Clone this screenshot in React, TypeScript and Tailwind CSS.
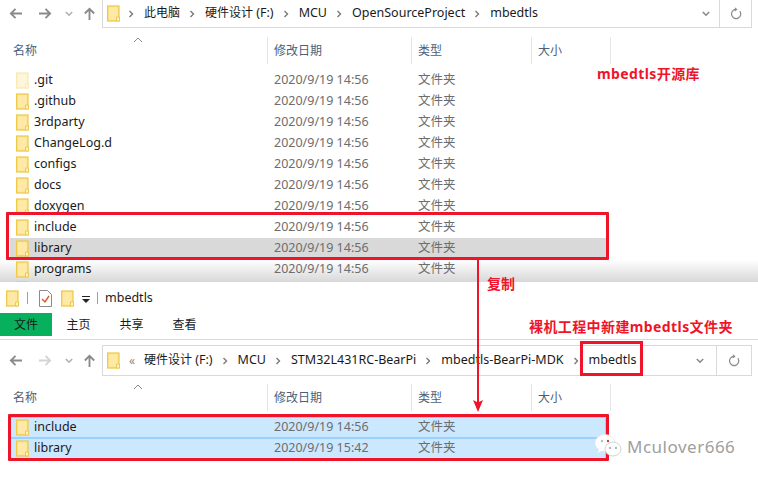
import React from "react";

const font = { fontFamily: '"Noto Sans","Noto Sans CJK SC",sans-serif' };

function Folder({ faded = false }: { faded?: boolean }) {
  return (
    <svg width="13" height="17" viewBox="0 0 13 17" className={faded ? "shrink-0 opacity-40" : "shrink-0"}>
      <rect x="0.6" y="1" width="11.4" height="15" fill="#fde48e" stroke="#eec94a" strokeWidth="1.2" />
      <rect x="2" y="2.5" width="8.6" height="12" fill="#fee9a6" />
      <path d="M9.5 16v-4h3v4z" fill="#fff3c4" stroke="#eec94a" strokeWidth="1" />
    </svg>
  );
}

function Sep() {
  return (
    <svg width="25" height="10" viewBox="0 0 25 10" className="shrink-0">
      <path d="M10.5 2l3 3-3 3" fill="none" stroke="#7a7a7a" strokeWidth="1.4" />
    </svg>
  );
}

function Arrow({ dir, light = false }: { dir: "left" | "right" | "up"; light?: boolean }) {
  const d = dir === "left" ? "M14 7H2M7 2L2 7l5 5" : dir === "right" ? "M0 7h12M7 2l5 5-5 5" : "M7 14V2M2 7l5-5 5 5";
  return (
    <svg width="13" height="13" viewBox="0 0 14 14" className="shrink-0">
      <path d={d} fill="none" stroke={light ? "#d4d4d4" : "#8a8a8a"} strokeWidth="2" />
    </svg>
  );
}

function Caret({ color = "#9a9a9a" }: { color?: string }) {
  return (
    <svg width="8" height="6" viewBox="0 0 10 7" className="shrink-0">
      <path d="M1 1l4 4 4-4" fill="none" stroke={color} strokeWidth="2" />
    </svg>
  );
}

function Refresh() {
  return (
    <svg width="12" height="13" viewBox="0 0 12 13" className="shrink-0">
      <path d="M9.8 4.2A4.6 4.6 0 1 1 6 2.4" fill="none" stroke="#8c8c8c" strokeWidth="1.2" />
      <path d="M4.8 0.2L7.6 2.4 4.8 4.6z" fill="#8c8c8c" />
    </svg>
  );
}

function Nav({ forwardLight, crumbs, lead, caretGap, refreshGap, tall }: {
  forwardLight: boolean;
  crumbs: React.ReactNode[];
  lead: React.ReactNode;
  caretGap: string;
  refreshGap: string;
  tall: string;
}) {
  return (
    <div className={`flex items-center pr-[6px] ${tall}`}>
      <div className="flex items-center w-[102px] shrink-0 pl-[9px] h-full">
        <Arrow dir="left" />
        <div className="ml-[17px]"><Arrow dir="right" light={forwardLight} /></div>
        <div className="ml-[13px]"><Caret color="#b0b0b0" /></div>
        <div className="ml-[10px]"><Arrow dir="up" /></div>
      </div>
      <div className="flex-1 h-full flex items-center pl-[4px] border border-[#d9d9d9] text-[12.5px] text-[#1a1a1a]">
        <Folder />
        {lead}
        {crumbs.map((c, i) => (
          <React.Fragment key={i}>
            {i > 0 && <Sep />}
            <span className="whitespace-nowrap">{c}</span>
          </React.Fragment>
        ))}
        <div className={`ml-auto flex items-center h-full ${caretGap}`}><Caret color="#8a8a8a" /></div>
        <div className={`flex items-center h-full border-l border-[#d9d9d9] ${refreshGap}`}><Refresh /></div>
      </div>
    </div>
  );
}

function Header() {
  return (
    <div className="relative flex h-[27px] items-center text-[12px] text-[#4c607a]">
      <svg width="10" height="6" viewBox="0 0 10 6" className="absolute left-[133px] top-0">
        <path d="M1 5l4-4 4 4" fill="none" stroke="#8a8a8a" strokeWidth="1" />
      </svg>
      <div className="w-[267px] pl-[13px]">名称</div>
      <div className="w-[144px] pl-[6px] h-full flex items-center border-l border-[#e5e5e5]">修改日期</div>
      <div className="w-[120px] pl-[6px] h-full flex items-center border-l border-[#e5e5e5]">类型</div>
      <div className="w-[80px] pl-[6px] h-full flex items-center border-x border-[#e5e5e5]">大小</div>
    </div>
  );
}

type RowProps = { name?: string; date?: string; faded?: boolean; tone?: "none" | "gray" | "blue" };

function Row({ name, date = "2020/9/19 14:56", faded, tone = "none" }: RowProps) {
  const bg = tone === "gray" ? "bg-[#d9d9d9]" : tone === "blue" ? "bg-[#cce8ff] border border-[#99d1ff]" : "";
  const pad = tone === "blue" ? "w-[263px] pl-[5px]" : "w-[264px] pl-[6px]";
  return (
    <div className={`relative flex items-center h-[21px] ml-[10px] w-[596px] text-[12.5px] ${bg}`}>
      <div className={`${pad} flex items-center text-[#1a1a1a] shrink-0`}>
        <Folder faded={faded} />
        {name && <span className="ml-[5px]">{name}</span>}
      </div>
      {name && <div className="w-[144px] text-[#6d6d6d] shrink-0">{date}</div>}
      {name && <div className="text-[#6d6d6d]">文件夹</div>}
    </div>
  );
}

const names = [".github", "3rdparty", "ChangeLog.d", "configs", "docs", "doxygen", "include"];
const drive = <><span className="text-[12px]">硬件设计</span> (F:)</>;

export default function App() {
  return (
    <div className="relative w-[758px] h-[477px] overflow-hidden bg-white" style={font}>
      {/* upper explorer window */}
      <div className="relative h-[282px] overflow-hidden">
        <div className="absolute left-0 right-0 bottom-0 h-[22px] bg-gradient-to-b from-white to-[#d8d8d8]" />
        <Nav
          forwardLight={false}
          crumbs={[<span className="text-[12px]">此电脑</span>, drive, "MCU", "OpenSourceProject", "mbedtls"]}
          lead={<div className="-ml-[1px]"><Sep /></div>}
          caretGap="pr-[9px]"
          refreshGap="pl-[10px] pr-[9px]"
          tall="relative h-[29px] -mt-[1px]"
        />
        <div className="h-[9px]" />
        <Header />
        <div className="h-[6px]" />
        <Row name=".git" faded />
        {names.map((n) => <Row key={n} name={n} />)}
        <Row name="library" tone="gray" />
        <Row name="programs" />
        <div className="-mt-[1px]"><Row /></div>
      </div>

      {/* lower explorer window */}
      <div className="flex items-center h-[31px] pl-[6px] pt-[1px]">
        <Folder />
        <div className="ml-[8px] w-px h-[12px] bg-[#a0a0a0]" />
        <svg width="13" height="17" viewBox="0 0 13 17" className="ml-[11px]">
          <path d="M.5.5h8l4 4v12H.5z" fill="#fff" stroke="#8a8a8a" />
          <path d="M3 9l3 3 4-6" fill="none" stroke="#e0562a" strokeWidth="1.4" />
        </svg>
        <div className="ml-[9px]"><Folder /></div>
        <svg width="8" height="7" viewBox="0 0 8 7" className="ml-[8px] mt-[3px]">
          <path d="M0 0h8v1H0zM0 3h8L4 7z" fill="#222" />
        </svg>
        <div className="ml-[7px] w-px h-[12px] bg-[#a0a0a0]" />
        <span className="ml-[7px] text-[12.5px] text-[#1a1a1a]">mbedtls</span>
      </div>
      <div className="flex items-center h-[23px] text-[12px] text-[#1a1a1a]">
        <div className="w-[52px] h-full bg-[#07b05d] flex items-center justify-center">文件</div>
        <div className="w-[53px] text-center pt-[1px]">主页</div>
        <div className="w-[53px] text-center pt-[1px]">共享</div>
        <div className="w-[53px] text-center pt-[1px]">查看</div>
      </div>
      <div className="h-[3px]" />
      <div className="h-px bg-[#d9d9d9]" />
      <div className="h-[5px]" />
      <Nav
        forwardLight
        crumbs={[drive, "MCU", "STM32L431RC-BearPi", "mbedtls-BearPi-MDK", "mbedtls"]}
        lead={<span className="w-[24px] text-center text-[#8a8a8a] text-[12px] leading-none">«</span>}
        caretGap="pr-[12px]"
        refreshGap="px-[11px]"
        tall="h-[31px]"
      />
      <div className="h-[8px]" />
      <Header />
      <div className="h-[6px]" />
      <Row name="include" tone="blue" />
      <Row name="library" date="2020/9/19 15:42" tone="blue" />

      {/* annotations drawn over the screenshot */}
      <div className="absolute left-[6px] top-[212px] w-[603px] h-[48px] border-[3px] border-[#f0142b] rounded-[1px]" />
      <div className="absolute left-[8px] top-[414px] w-[601px] h-[47px] border-[3px] border-[#f0142b] rounded-[1px]" />
      <div className="absolute left-[580px] top-[341px] w-[63px] h-[35px] border-[3px] border-[#f0142b]" />
      <div className="absolute left-[477px] top-[260px] w-[2px] h-[146px] bg-[#f0142b]" />
      <svg width="10" height="12" viewBox="0 0 10 12" className="absolute left-[473px] top-[400px]">
        <path d="M0 0l5 2.5L10 0 5 12z" fill="#f0142b" />
      </svg>
      <span className="absolute left-[597px] top-[65px] text-[14px] leading-[18px] font-bold text-[#f0142b] whitespace-nowrap tracking-[0.4px]">mbedtls开源库</span>
      <span className="absolute left-[487px] top-[275px] text-[14px] leading-[18px] font-bold text-[#f0142b]">复制</span>
      <span className="absolute left-[529px] top-[318px] text-[14px] leading-[18px] font-bold text-[#f0142b] whitespace-nowrap tracking-[0.4px]">裸机工程中新建mbedtls文件夹</span>

      {/* watermark */}
      <svg width="28" height="24" viewBox="0 0 28 24" className="absolute left-[594px] top-[433px]">
        <ellipse cx="11" cy="10" rx="10" ry="8.5" fill="#fff" stroke="#e4e4e4" strokeWidth="0.6" />
        <path d="M5 16l-1 4 5-3z" fill="#fff" />
        <ellipse cx="19" cy="16" rx="8" ry="7" fill="#fff" stroke="#c8c8c8" strokeWidth="0.8" />
        <circle cx="8" cy="8" r="1.2" fill="#bbb" />
        <circle cx="14" cy="8" r="1.2" fill="#d04040" />
        <circle cx="16" cy="15" r="1" fill="#999" />
        <circle cx="22" cy="15" r="1" fill="#999" />
      </svg>
      <span className="absolute left-[627px] top-[435px] text-[17px] leading-[24px] tracking-[0.5px] text-[#a0a0a0] whitespace-nowrap [text-shadow:0_0_2px_#fff]">Mculover666</span>
    </div>
  );
}
